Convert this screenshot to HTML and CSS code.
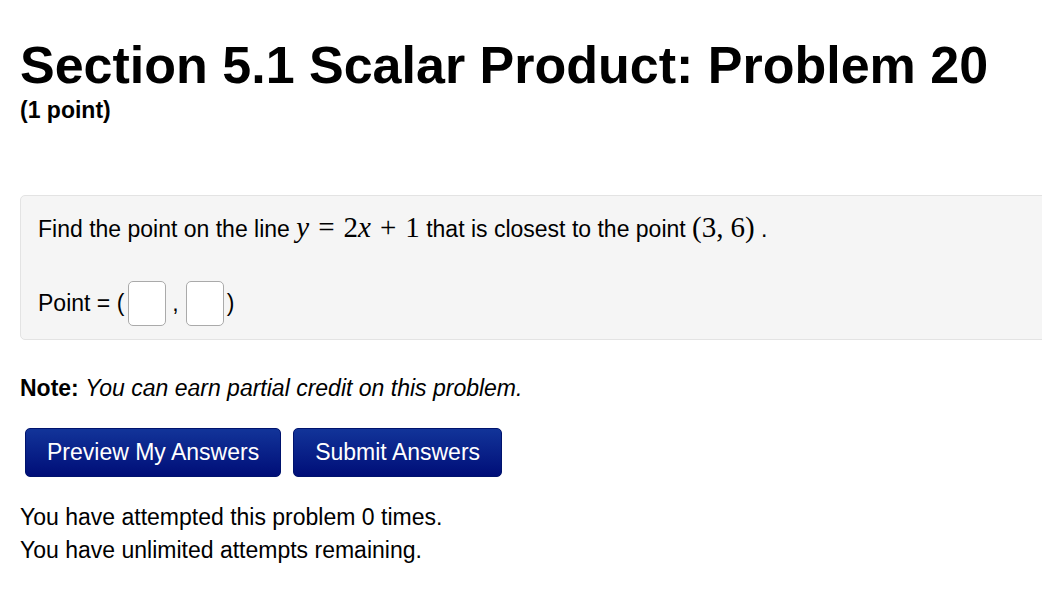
FILE: index.html
```html
<!DOCTYPE html>
<html lang="en">
<head>
    <meta charset="UTF-8">
    <meta name="viewport" content="width=device-width, initial-scale=1.0">
    <title>Section 5.1 Scalar Product: Problem 20</title>
    <link rel="stylesheet" href="styles.css">
</head>
<body>
    <div class="page">
        <h1 class="problem-title">Section 5.1 Scalar Product: Problem 20</h1>
        <div class="points">(1 point)</div>

        <div class="problem-box">
            <p class="statement">
                Find the point on the line
                <span class="math"><i>y</i><span class="op">=</span>2<i>x</i><span class="op">+</span>1</span>
                that is closest to the point
                <span class="math">(3,<span class="sep"></span>6)</span> .
            </p>
            <div class="answer-row">
                Point = (
                <input class="answer" type="text">
                <span class="comma">,</span>
                <input class="answer" type="text">
                )
            </div>
        </div>

        <p class="note"><strong>Note:</strong> <em>You can earn partial credit on this problem.</em></p>

        <div class="buttons">
            <button class="btn">Preview My Answers</button>
            <button class="btn">Submit Answers</button>
        </div>

        <div class="attempts">
            <div>You have attempted this problem 0 times.</div>
            <div>You have unlimited attempts remaining.</div>
        </div>
    </div>
</body>
</html>
```

FILE: styles.css
```css
body {
    font-family: "Liberation Sans", Arial, sans-serif;
    margin: 0;
    padding: 0;
    background: #fff;
    color: #000;
    font-size: 23px;
}

.page {
    padding: 0 0 0 20px;
    overflow: hidden;
}

.problem-title {
    font-size: 52px;
    font-weight: bold;
    margin: 0;
    padding-top: 35px;
    line-height: 60px;
}

.points {
    font-weight: bold;
    line-height: 30px;
    margin-top: 0;
}

.problem-box {
    margin-top: 70px;
    margin-right: -30px;
    background-color: #f5f5f5;
    border: 1px solid #e3e3e3;
    border-radius: 5px;
    padding: 14px 17px 16px 17px;
    height: 113px;
}

.statement {
    margin: 0;
    line-height: 34px;
}

.math {
    font-family: "Liberation Serif", "Times New Roman", serif;
    font-size: 29px;
}

.math i {
    font-style: italic;
}

.op {
    margin: 0 9px;
}

.sep {
    display: inline-block;
    width: 7px;
}

.answer-row {
    display: flex;
    align-items: center;
    margin-top: 35px;
}

.answer-row input {
    box-sizing: border-box;
    width: 38px;
    height: 45px;
    border: 1px solid #aaa;
    border-radius: 5px;
    background: #fff;
    margin: 0 3px 0 4px;
    font-size: 20px;
}

.comma {
    margin: 0 3px;
}

.note {
    margin: 34px 0 0 0;
    line-height: 28px;
}

.buttons {
    display: flex;
    gap: 12px;
    margin-top: 26px;
    padding-left: 5px;
}

.btn {
    font-family: "Liberation Sans", Arial, sans-serif;
    font-size: 23px;
    color: #fff;
    height: 49px;
    padding: 0 21px;
    border: 1px solid #00136d;
    border-radius: 5px;
    background: linear-gradient(#123499, #000e78);
    cursor: pointer;
}

.attempts {
    margin-top: 24px;
    line-height: 33px;
}
```
